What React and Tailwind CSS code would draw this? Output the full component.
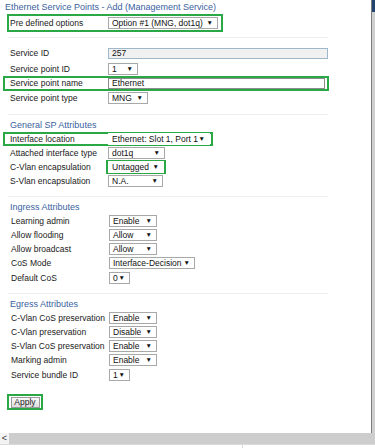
const green = 'border-2 border-[#2aa846]';

function Select({ value, className = '' }) {
  return (
    <div
      className={`flex h-[12px] shrink-0 items-center justify-between whitespace-nowrap border border-[#a8a8a8] bg-white pl-[3px] pr-[4px] text-[8.5px] leading-none text-[#111] ${className}`}
    >
      <span>{value}</span>
      <span className="text-[6.5px]">▼</span>
    </div>
  );
}

function Row({ label, children }) {
  return (
    <div className="flex h-[14px] items-center pl-[10px]">
      <span className="w-[98px] shrink-0 whitespace-nowrap text-[8.5px] leading-none text-[#1a1a1a]">{label}</span>
      {children}
    </div>
  );
}

function Divider({ className = '' }) {
  return <div className={`ml-[8px] h-px w-[320px] bg-[#eeeeee] ${className}`} />;
}

function Heading({ children }) {
  return (
    <div className="mt-[3px] flex h-[14px] items-center pl-[10px] text-[9px] leading-none text-[#3a62a0]">
      {children}
    </div>
  );
}

export default function App() {
  return (
    <div className="flex h-[448px] w-[375px] flex-col overflow-hidden bg-white font-['Liberation_Sans',Arial,sans-serif]">
      <div className="flex min-h-0 flex-1">
        <div className="flex-1">
          <div className="flex h-[14px] items-center whitespace-nowrap pl-[5px] text-[9px] leading-none text-[#3a62a0]">
            Ethernet Service Points - Add (Management Service)
          </div>

          <div className={`ml-[7px] flex h-[18px] w-[216px] items-center pl-px ${green}`}>
            <span className="w-[98px] shrink-0 whitespace-nowrap text-[8.5px] leading-none text-[#1a1a1a]">Pre defined options</span>
            <Select value="Option #1 (MNG, dot1q)" className="w-[110px]" />
          </div>

          <Divider className="mt-[5px]" />

          <div className="mt-[8px]">
            <Row label="Service ID">
              <div className="flex h-[11px] w-[220px] items-center border border-[#9db7cb] bg-[#f1f1f1] pl-[3px] text-[8.5px] leading-none text-[#111]">
                257
              </div>
            </Row>
          </div>
          <div className="mt-[2px]">
            <Row label="Service point ID">
              <Select value="1" className="w-[30px]" />
            </Row>
          </div>
          <div className={`ml-[3px] flex h-[15px] w-[326px] items-center pl-[5px] ${green}`}>
            <span className="w-[98px] shrink-0 whitespace-nowrap text-[8.5px] leading-none text-[#1a1a1a]">Service point name</span>
            <div className="flex h-[11px] w-[217px] items-center border border-[#8c8c8c] bg-white pl-[3px] text-[8.5px] leading-none text-[#111]">
              Ethernet
            </div>
          </div>
          <Row label="Service point type">
            <Select value="MNG" className="w-[40px]" />
          </Row>

          <Divider className="mt-[9px]" />
          <Heading>General SP Attributes</Heading>

          <div className={`ml-[3px] flex h-[14px] w-[210px] items-center pl-[5px] ${green}`}>
            <span className="w-[98px] shrink-0 whitespace-nowrap text-[8.5px] leading-none text-[#1a1a1a]">Interface location</span>
            <Select value="Ethernet: Slot 1, Port 1" className="w-[102px] border-transparent" />
          </div>
          <Row label="Attached interface type">
            <Select value="dot1q" className="w-[57px]" />
          </Row>
          <Row label="C-Vlan encapsulation">
            <div className={`-ml-[2px] flex h-[14px] w-[60px] items-center ${green}`}>
              <Select value="Untagged" className="w-[56px] border-transparent" />
            </div>
          </Row>
          <Row label="S-Vlan encapsulation">
            <Select value="N.A." className="w-[55px]" />
          </Row>

          <Divider className="mt-[8px]" />
          <Heading>Ingress Attributes</Heading>
          <div className="pl-px">
            <Row label="Learning admin">
              <Select value="Enable" className="w-[48px]" />
            </Row>
            <Row label="Allow flooding">
              <Select value="Allow" className="w-[48px]" />
            </Row>
            <Row label="Allow broadcast">
              <Select value="Allow" className="w-[48px]" />
            </Row>
            <Row label="CoS Mode">
              <Select value="Interface-Decision" className="w-[86px]" />
            </Row>
            <div className="mt-px">
              <Row label="Default CoS">
                <Select value="0" className="w-[21px]" />
              </Row>
            </div>
          </div>

          <Divider className="mt-[8px]" />
          <Heading>Egress Attributes</Heading>
          <div className="pl-px">
            <Row label="C-Vlan CoS preservation">
              <Select value="Enable" className="w-[48px]" />
            </Row>
            <Row label="C-Vlan preservation">
              <Select value="Disable" className="w-[48px]" />
            </Row>
            <Row label="S-Vlan CoS preservation">
              <Select value="Enable" className="w-[48px]" />
            </Row>
            <Row label="Marking admin">
              <Select value="Enable" className="w-[48px]" />
            </Row>
            <div className="mt-px">
              <Row label="Service bundle ID">
                <Select value="1" className="w-[21px]" />
              </Row>
            </div>
          </div>

          <div className={`ml-[7px] mt-[12px] flex h-[16px] w-[36px] items-center justify-center ${green}`}>
            <button className="flex h-[11px] w-[29px] items-center justify-center border border-[#9a9a9a] bg-gradient-to-b from-[#fafafa] to-[#dcdcdc] text-[8.5px] leading-none text-[#222]">
              Apply
            </button>
          </div>
        </div>

        <div className="flex w-[4px] shrink-0 flex-col border-l border-[#7d7d7d] bg-[#cfcfcf]">
          <div className="h-[12px] bg-[#23446f]" />
        </div>
      </div>

      <div className="flex h-[11px] shrink-0 items-center bg-[#cdcdcd]">
        <div className="flex h-full w-[9px] items-center justify-center bg-[#f3f3f3] text-[9px] leading-none text-[#333]">
          &lt;
        </div>
      </div>
      <div className="flex h-[4px] shrink-0 border-t border-[#dadada] bg-white">
        <div className="w-[243px] border-r border-[#dadada]" />
      </div>
    </div>
  );
}
